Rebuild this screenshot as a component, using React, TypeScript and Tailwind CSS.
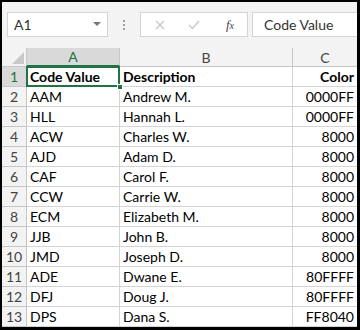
import React from 'react';

const rows: [string, string, string][] = [
  ['AAM', 'Andrew M.', '0000FF'],
  ['HLL', 'Hannah L.', '0000FF'],
  ['ACW', 'Charles W.', '8000'],
  ['AJD', 'Adam D.', '8000'],
  ['CAF', 'Carol F.', '8000'],
  ['CCW', 'Carrie W.', '8000'],
  ['ECM', 'Elizabeth M.', '8000'],
  ['JJB', 'John B.', '8000'],
  ['JMD', 'Joseph D.', '8000'],
  ['ADE', 'Dwane E.', '80FFFF'],
  ['DFJ', 'Doug J.', '80FFFF'],
  ['DPS', 'Dana S.', 'FF8040'],
];

const font = { fontFamily: 'Lato, "Open Sans", sans-serif' };

const App = () => {
  return (
    <div className="w-[360px] h-[330px] bg-black pt-[2px] pl-[2px] pr-[3px] pb-[3px] overflow-hidden" style={font}>
      <div className="w-full h-full bg-white flex flex-col overflow-hidden">
        {/* Formula bar */}
        <div className="h-[46px] shrink-0 bg-[#f3f3f3] flex items-start pt-[10px] pl-[5px] gap-0">
          <div className="w-[101px] h-[25px] bg-white border border-[#d4d4d4] flex items-center justify-between pl-[6px] pr-[6px]">
            <span className="text-[14px] text-[#333]">A1</span>
            <svg width="8" height="5" viewBox="0 0 8 5"><path d="M0 0 L8 0 L4 4 Z" fill="#777" /></svg>
          </div>
          <div className="w-[32px] h-[25px] flex flex-col items-center justify-center gap-[2px]">
            <div className="w-[2px] h-[2px] bg-[#a0a0a0]" />
            <div className="w-[2px] h-[2px] bg-[#a0a0a0]" />
            <div className="w-[2px] h-[2px] bg-[#a0a0a0]" />
          </div>
          <div className="w-[108px] h-[25px] bg-white border border-[#d4d4d4] flex items-center">
            <div className="w-[38px] flex justify-center">
              <svg width="10" height="10" viewBox="0 0 10 10"><path d="M1 1 L9 9 M9 1 L1 9" stroke="#c8c8c8" strokeWidth="1.3" /></svg>
            </div>
            <div className="w-[30px] flex justify-center">
              <svg width="12" height="10" viewBox="0 0 12 10"><path d="M1 5 L4.5 8.5 L11 1" stroke="#c8c8c8" strokeWidth="1.4" fill="none" /></svg>
            </div>
            <div className="flex-1 flex justify-center pl-[4px]">
              <span className="text-[13px] italic text-[#444]" style={{ fontFamily: '"Liberation Serif", serif' }}>f<span className="text-[10px]">x</span></span>
            </div>
          </div>
          <div className="ml-[4px] flex-1 h-[25px] bg-white border border-[#d4d4d4] border-r-0 flex items-center pl-[11px]">
            <span className="text-[14px] text-[#333]">Code Value</span>
          </div>
        </div>

        {/* Grid */}
        <div className="grid grid-cols-[25px_93px_173px_1fr] bg-white">
          {/* header row */}
          <div className="h-[19px] bg-[#f3f3f3] border-r border-b border-[#c6c6c6] relative">
            <svg className="absolute right-[2px] bottom-[2px]" width="12" height="12" viewBox="0 0 12 12"><path d="M12 0 L12 12 L0 12 Z" fill="#c9c9c9" /></svg>
          </div>
          <div className="h-[19px] bg-[#d9d9d9] border-r border-[#c6c6c6] border-b-2 border-b-[#217346] flex items-center justify-center text-[14px] text-[#217346]">A</div>
          <div className="h-[19px] bg-[#f3f3f3] border-r border-b border-[#c6c6c6] flex items-center justify-center text-[14px] text-[#444]">B</div>
          <div className="h-[19px] bg-[#f3f3f3] border-b border-[#c6c6c6] flex items-center justify-center text-[14px] text-[#444]">C</div>

          {/* row 1 */}
          <div className="h-[20px] bg-[#d9d9d9] border-r border-b border-[#c6c6c6] flex items-center justify-center text-[14px] text-[#217346]">1</div>
          <div className="h-[20px] relative border-r border-b border-[#d4d4d4] flex items-center pl-[3px] text-[14px] font-bold text-black">
            Code Value
            <div className="absolute -left-[1px] -top-[1px] -right-[1px] -bottom-[1px] border-2 border-[#217346] pointer-events-none" />
            <div className="absolute -right-[4px] -bottom-[4px] w-[6px] h-[6px] bg-[#217346] border border-white z-10" />
          </div>
          <div className="h-[20px] border-r border-b border-[#d4d4d4] flex items-center pl-[3px] text-[14px] font-bold text-black">Description</div>
          <div className="h-[20px] border-b border-[#d4d4d4] flex items-center justify-end pr-[3px] text-[14px] font-bold text-black">Color</div>

          {rows.map((r, i) => (
            <React.Fragment key={i}>
              <div className="h-[20px] bg-[#f3f3f3] border-r border-b border-[#c6c6c6] flex items-center justify-center text-[14px] text-[#444]">{i + 2}</div>
              <div className="h-[20px] border-r border-b border-[#d4d4d4] flex items-center pl-[3px] text-[14px] text-black">{r[0]}</div>
              <div className="h-[20px] border-r border-b border-[#d4d4d4] flex items-center pl-[3px] text-[14px] text-black">{r[1]}</div>
              <div className="h-[20px] border-b border-[#d4d4d4] flex items-center justify-end pr-[3px] text-[14px] text-black">{r[2]}</div>
            </React.Fragment>
          ))}
        </div>
      </div>
    </div>
  );
};

export default App;
